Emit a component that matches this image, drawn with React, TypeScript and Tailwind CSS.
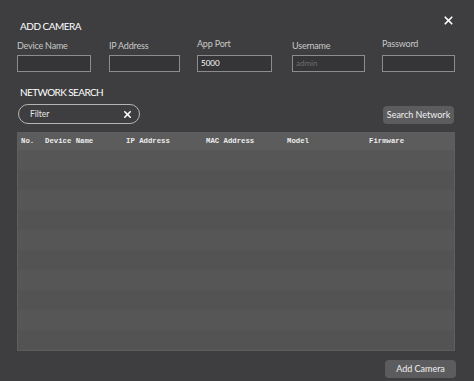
import { X } from 'lucide-react';

const fields = [
  { label: 'Device Name', value: '', placeholder: '', w: 'w-[74px]', gap: 'mr-[18px]' },
  { label: 'IP Address', value: '', placeholder: '', w: 'w-[71px]', gap: 'mr-[17px]' },
  { label: 'App Port', value: '5000', placeholder: '', w: 'w-[75px]', gap: 'mr-[20px]' },
  { label: 'Username', value: '', placeholder: 'admin', w: 'w-[73px]', gap: 'mr-[17px]' },
  { label: 'Password', value: '', placeholder: '', w: 'w-[73px]', gap: '' },
];

const columns = [
  { label: 'No.', w: 'w-[24px]' },
  { label: 'Device Name', w: 'w-[81px]' },
  { label: 'IP Address', w: 'w-[80px]' },
  { label: 'MAC Address', w: 'w-[81px]' },
  { label: 'Model', w: 'w-[82px]' },
  { label: 'Firmware', w: 'w-[60px]' },
];

export default function App() {
  return (
    <div className="w-[474px] h-[381px] bg-[#3e3e40] text-white font-['Lato','Liberation_Sans',sans-serif] relative overflow-hidden">
      <button className="absolute left-[442px] top-[14px] text-white">
        <X className="w-[13px] h-[13px]" strokeWidth={3.2} />
      </button>

      <div className="pl-[17px] pt-[19px]">
        <h1 className="pl-[3px] text-[10px] leading-[14px] tracking-[-0.5px]">ADD CAMERA</h1>

        <div className="flex mt-[7px]">
          {fields.map((f) => (
            <div key={f.label} className={`flex flex-col ${f.gap}`}>
              <label
                className={`text-[9px] leading-[12px] tracking-[-0.2px] text-[#c8c8c8] ${f.label === 'Password' || f.label === 'App Port' ? '-mt-[2px] mb-[2px]' : ''}`}
              >
                {f.label}
              </label>
              <div
                className={`${f.w} h-[17px] mt-[3px] border border-[#8c8c8c] bg-[#353537] text-[8px] leading-[15px] px-[3px] ${f.value ? 'text-white' : 'text-[#6e6e6e]'}`}
              >
                {f.value || f.placeholder}
              </div>
            </div>
          ))}
        </div>

        <h2 className="pl-[3px] mt-[13px] text-[10px] leading-[14px] tracking-[-0.6px]">NETWORK SEARCH</h2>

        <div className="flex items-end justify-between pr-[20px] mt-[5px]">
          <div className="ml-[1px] w-[122px] h-[20px] rounded-full border border-[#b4b4b4] flex items-center justify-between pl-[11px] pr-[6px]">
            <span className="text-[8.5px] text-[#e6e6e6]">Filter</span>
            <X className="w-[11px] h-[11px] text-white" strokeWidth={3.5} />
          </div>
          <button className="w-[71px] h-[18px] rounded-[4px] bg-[#5c5c5e] text-[9px] leading-[18px] text-[#f0f0f0]">
            Search Network
          </button>
        </div>

        <div className="mt-[8px] w-[438px] h-[219px] bg-[#555555] border border-[#5e5e5e] flex flex-col">
          <div className="h-[21px] bg-[#5c5c5c] flex items-center pl-[3px] font-['Liberation_Mono',monospace] text-[7.3px] font-bold text-[#ececec]">
            {columns.map((c) => (
              <span key={c.label} className={c.w}>
                {c.label}
              </span>
            ))}
          </div>
          <div className="flex-1 flex flex-col">
            {Array.from({ length: 10 }).map((_, i) => (
              <div key={i} className={`h-[20px] ${i % 2 === 0 ? 'bg-[#565656]' : 'bg-[#535353]'}`} />
            ))}
          </div>
        </div>

        <div className="flex justify-end pr-[18px] mt-[9px]">
          <button className="w-[71px] h-[18px] rounded-[4px] bg-[#5c5c5e] text-[9px] leading-[18px] text-[#f0f0f0]">
            Add Camera
          </button>
        </div>
      </div>
    </div>
  );
}
